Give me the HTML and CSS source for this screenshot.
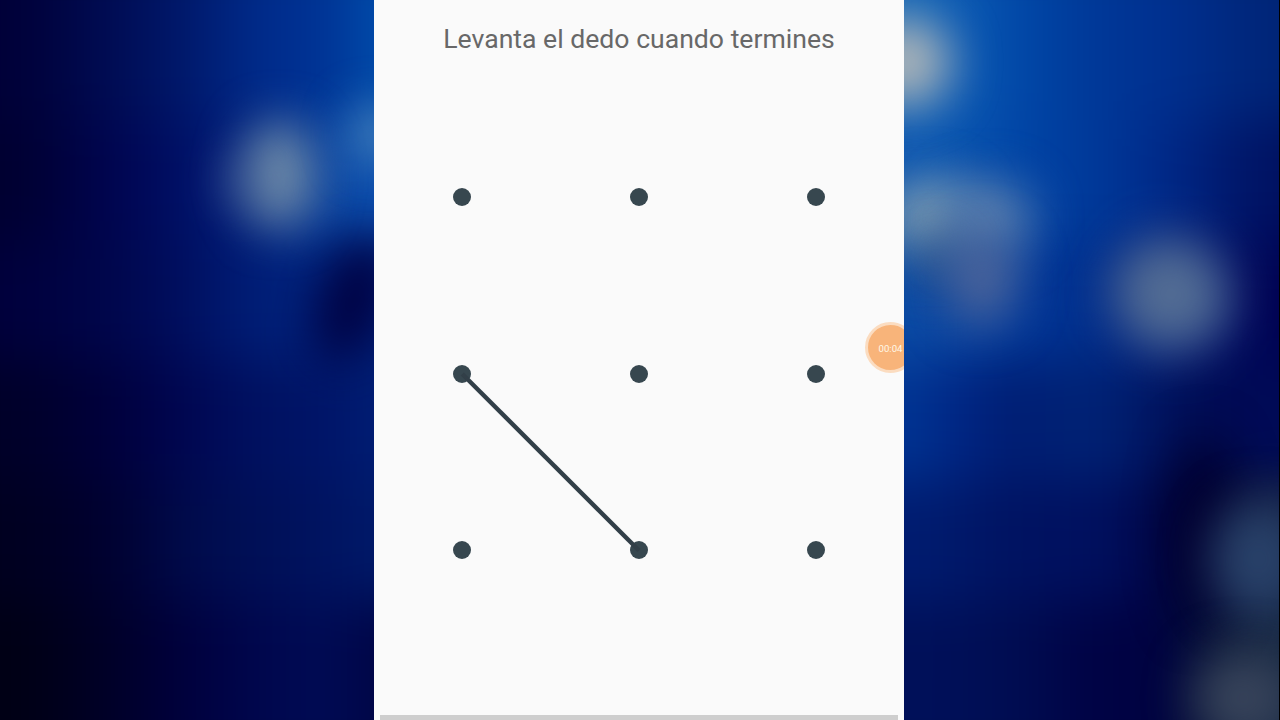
FILE: index.html
```
<!DOCTYPE html>
<html lang="es">
<head>
    <meta charset="UTF-8">
    <meta name="viewport" content="width=device-width, initial-scale=1.0">
    <title>Patrón</title>
    <link rel="stylesheet" href="styles.css">
</head>
<body>
    <div class="fondo izquierda">
        <div class="mezcla">
            <div class="franja i1"></div>
            <div class="franja i2"></div>
            <div class="franja i3"></div>
            <div class="franja i4"></div>
            <div class="franja i5"></div>
            <div class="franja i6"></div>
        </div>
        <div class="mancha m1"></div>
        <div class="mancha m2"></div>
        <div class="mancha m3"></div>
        <div class="mancha m4"></div>
    </div>

    <main class="pantalla">
        <h1>Levanta el dedo cuando termines</h1>
        <div class="patron">
            <span class="punto"></span>
            <span class="punto"></span>
            <span class="punto"></span>
            <span class="punto"></span>
            <span class="punto"></span>
            <span class="punto"></span>
            <span class="punto"></span>
            <span class="punto"></span>
            <span class="punto"></span>
            <svg class="trazo" viewBox="0 0 530 530">
                <line x1="88.3" y1="265" x2="265" y2="441.5"/>
            </svg>
        </div>
        <div class="barra"></div>
        <div class="grabando"><span>00:04</span></div>
    </main>

    <div class="fondo derecha">
        <div class="mezcla">
            <div class="franja d1"></div>
            <div class="franja d2"></div>
            <div class="franja d3"></div>
            <div class="franja d4"></div>
            <div class="franja d5"></div>
            <div class="franja d6"></div>
        </div>
        <div class="mancha m5"></div>
        <div class="mancha m6"></div>
        <div class="mancha m7"></div>
        <div class="mancha m8"></div>
        <div class="mancha m9"></div>
        <div class="mancha m10"></div>
        <div class="mancha m11"></div>
        <div class="mancha m12"></div>
        <div class="mancha m13"></div>
    </div>
</body>
</html>
```
FILE: styles.css
```
* { box-sizing: border-box; }
body {
    margin: 0;
    height: 720px;
    display: flex;
    overflow: hidden;
    background: #000;
    font-family: Roboto, sans-serif;
}

/* fondo desenfocado */
.fondo {
    position: relative;
    overflow: hidden;
    height: 720px;
}
.izquierda { width: 374px; }
.derecha { width: 375px; }
.mezcla {
    display: flex;
    flex-direction: column;
    height: 840px;
    margin: -60px -60px;
    padding: 0;
    filter: blur(28px);
}
.franja { height: 120px; }
.franja:first-child, .franja:last-child { height: 180px; }
.i1 { background: linear-gradient(90deg, #000038 80px, #000c54 172px, #00196c 247px, #002c8c 322px, #003496 397px, #0050ae 440px); }
.i2 { background: linear-gradient(90deg, #000030 80px, #000450 172px, #001066 247px, #002484 322px, #0a48a5 397px, #0c50b0 440px); }
.i3 { background: linear-gradient(90deg, #00003c 80px, #00064c 172px, #000f60 247px, #00207a 322px, #002078 397px); }
.i4 { background: linear-gradient(90deg, #000028 80px, #00003c 172px, #000652 247px, #001262 322px, #001468 397px, #001f76 435px); }
.i5 { background: linear-gradient(90deg, #000020 80px, #000030 172px, #000b4c 247px, #001058 322px, #001462 397px, #001a6a 435px); }
.i6 { background: linear-gradient(90deg, #000014 80px, #000028 172px, #00003e 247px, #00074e 322px, #000c56 397px, #000444 435px); }
.d1 { background: linear-gradient(90deg, #1468b8 60px, #0c5ab4 120px, #0048a8 172px, #003898 247px, #003090 322px, #002476 430px); }
.d2 { background: linear-gradient(90deg, #0c56b0 97px, #0044a6 172px, #003a9a 247px, #002888 322px, #001668 400px, #001060 435px); }
.d3 { background: linear-gradient(90deg, #0c4ca6 80px, #00389a 172px, #002e8c 247px, #002080 322px, #00085c 400px, #000050 435px); }
.d4 { background: linear-gradient(90deg, #003694 60px, #002686 110px, #001c70 172px, #002478 247px, #001866 300px, #000a50 360px, #000a58 435px); }
.d5 { background: linear-gradient(90deg, #001c70 80px, #001260 172px, #001060 257px, #00084c 310px, #000030 350px, #142040 430px); }
.d6 { background: linear-gradient(90deg, #00105a 80px, #000d52 172px, #000244 247px, #000242 322px, #081434 370px, #182a44 430px); }

.mancha {
    position: absolute;
    border-radius: 50%;
    filter: blur(24px);
}
.m1 { left: 244px; top: 122px; width: 70px; height: 106px; background: #7490aa; }
.m2 { left: 218px; top: 156px; width: 50px; height: 52px; background: #4a6598; opacity: .45; }
.m3 { left: 352px; top: 108px; width: 52px; height: 52px; background: #5590c0; }
.m4 { left: 322px; top: 234px; width: 62px; height: 132px; background: #000040; transform: rotate(20deg); }
.m5 { left: -44px; top: 18px; width: 90px; height: 88px; background: #b0b6b8; }
.m6 { left: -20px; top: 180px; width: 88px; height: 74px; background: #809eb2; }
.m7 { left: 38px; top: 182px; width: 90px; height: 72px; background: #5c80ae; }
.m8 { left: 12px; top: 236px; width: 44px; height: 48px; background: #204378; opacity: .8; }
.m9 { left: 42px; top: 232px; width: 72px; height: 94px; background: #4c649a; }
.m10 { left: 208px; top: 238px; width: 118px; height: 112px; background: #526c94; transform: rotate(25deg); }
.m11 { left: 270px; top: 435px; width: 58px; height: 190px; background: #000030; }
.m12 { left: 306px; top: 500px; width: 98px; height: 118px; background: #29426a; }
.m13 { left: 290px; top: 650px; width: 100px; height: 96px; background: #38445b; }

/* celular */
.pantalla {
    position: relative;
    display: flex;
    flex-direction: column;
    width: 530px;
    height: 720px;
    overflow: hidden;
    background: #fafafa;
}
h1 {
    margin: 0;
    height: 109px;
    padding-top: 23px;
    text-align: center;
    font-size: 26.6px;
    font-weight: 400;
    line-height: 32px;
    color: #686868;
}
.patron {
    position: relative;
    display: grid;
    grid-template-columns: repeat(3, 1fr);
    grid-template-rows: repeat(3, 1fr);
    place-items: center;
    height: 529.6px;
}
.punto {
    width: 18px;
    height: 18px;
    border-radius: 50%;
    background: #37474f;
}
.trazo {
    position: absolute;
    top: 0;
    left: 0;
    width: 530px;
    height: 530px;
}
.trazo line {
    stroke: #323f48;
    stroke-width: 4.4;
}
.barra {
    height: 5px;
    margin: auto 6px 0;
    background: #cecece;
}
.grabando {
    position: absolute;
    top: 322px;
    right: -12px;
    width: 51px;
    height: 51px;
    border: 3px solid #fbdcc0;
    border-radius: 50%;
    background: #f8b47a;
    color: #fff8e8;
    font-size: 9.6px;
    line-height: 47px;
    text-align: center;
}
```
